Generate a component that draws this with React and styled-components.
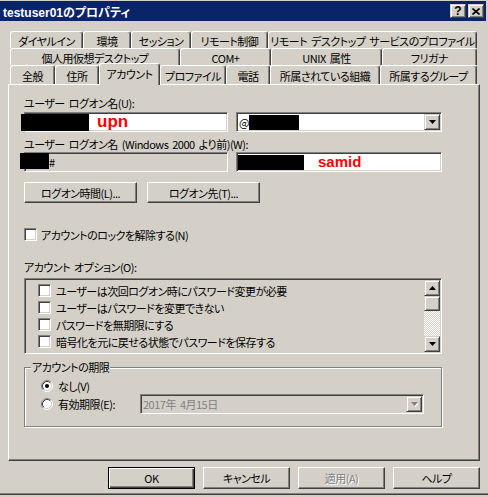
import styled, { createGlobalStyle, css } from 'styled-components'

const FACE = '#d4d0c8'
const SHADOW = '#808080'
const DARK = '#404040'
const HILITE = '#ffffff'
const FONT = `"Noto Sans CJK JP", "Liberation Sans", sans-serif`

const GlobalStyle = createGlobalStyle`
  html, body { margin: 0; background: ${FACE}; }
  body {
    font-family: ${FONT};
    font-size: 11px;
    letter-spacing: -0.5px;
    word-spacing: 2px;
    color: #000;
    font-feature-settings: "palt";
  }
  * { box-sizing: border-box; }
`

// classic 3D edges
const raised = css`
  border: 1px solid;
  border-color: ${HILITE} ${DARK} ${DARK} ${HILITE};
  box-shadow: inset -1px -1px ${SHADOW};
`
const smallRaised = css`
  border: 1px solid;
  border-color: ${FACE} ${DARK} ${DARK} ${FACE};
  box-shadow: inset 1px 1px ${HILITE}, inset -1px -1px ${SHADOW};
`
const sunken = css`
  border: 1px solid;
  border-color: ${SHADOW} ${HILITE} ${HILITE} ${SHADOW};
  box-shadow: inset 1px 1px ${DARK}, inset -1px -1px ${FACE};
`

const Window = styled.div`
  width: 488px;
  height: 495px;
  padding: 1px 2px 0 0;
  display: flex;
  flex-direction: column;
  border-bottom: 1px solid ${DARK};
  box-shadow: inset 0 -1px ${SHADOW};
`

const TitleBar = styled.div`
  height: 20px;
  flex: none;
  background: #0a246a;
  color: #fff;
  display: flex;
  align-items: center;
  justify-content: space-between;
  padding: 0 2px 0 3px;
`

const Title = styled.span`
  font-family: "Liberation Sans", "Noto Sans CJK JP", sans-serif;
  font-weight: bold;
  font-size: 12px;
  letter-spacing: 0;
  word-spacing: 0;
`

const CaptionButtons = styled.div`
  display: flex;
  gap: 2px;
`

const CaptionButton = styled.div`
  ${smallRaised}
  width: 16px;
  height: 14px;
  background: ${FACE};
  color: #000;
  display: flex;
  align-items: center;
  justify-content: center;
  font-family: "Liberation Sans", sans-serif;
  font-weight: bold;
  font-size: 12px;
  letter-spacing: 0;
  line-height: 1;
`

const Body = styled.div`
  flex: 1;
  padding: 10px 6px 0 8px;
  display: flex;
  flex-direction: column;
`

const TabRows = styled.div`
  display: flex;
  flex-direction: column;
  margin-left: 2px;
`

const TabRow = styled.div`
  display: flex;
  height: ${p => p.$h}px;
`

const Tab = styled.div`
  flex: none;
  width: ${p => p.$w}px;
  display: flex;
  align-items: center;
  justify-content: center;
  padding-top: 1px;
  white-space: nowrap;
  line-height: 14px;
  border-left: 1px solid ${HILITE};
  border-top: 1px solid ${HILITE};
  border-right: 1px solid ${DARK};
  box-shadow: inset -1px 0 ${SHADOW};
  border-top-left-radius: 3px;
  border-top-right-radius: 3px;
  background: ${FACE};
  ${p => p.$active && css`
    position: relative;
    z-index: 1;
    margin-top: -2px;
    margin-bottom: -1px;
    padding-bottom: 2px;
  `}
`

const Panel = styled.div`
  ${raised}
  height: 377px;
  flex: none;
  padding: 11px 0 0 15px;
  display: flex;
  flex-direction: column;
`

const Label = styled.div`
  line-height: 14px;
  height: 14px;
  white-space: nowrap;
  margin-top: ${p => p.$mt || 0}px;
`

const FieldRow = styled.div`
  display: flex;
  gap: 8px;
  margin-top: ${p => p.$mt || 0}px;
`

const Field = styled.div`
  ${sunken}
  width: ${p => p.$w}px;
  height: 20px;
  flex: none;
  background: ${p => (p.$disabled ? FACE : '#fff')};
  display: flex;
  align-items: center;
  padding: 0 1px 0 ${p => p.$pad || 0}px;
  color: ${p => (p.$muted ? SHADOW : '#000')};
  white-space: pre;
`

const Redact = styled.span`
  display: block;
  flex: none;
  background: #000;
  width: ${p => p.$w}px;
  height: ${p => p.$h}px;
  margin-left: ${p => p.$ml || 0}px;
  margin-top: ${p => p.$dy || 0}px;
`

const Scribble = styled.span`
  color: #ff0000;
  font-family: "Liberation Sans", sans-serif;
  font-weight: bold;
  font-size: ${p => p.$size}px;
  letter-spacing: 0;
  line-height: 1;
  margin-left: ${p => p.$ml}px;
  margin-top: -2px;
`

const DropButton = styled.div`
  ${smallRaised}
  width: 16px;
  height: 16px;
  flex: none;
  margin-left: auto;
  background: ${FACE};
  display: flex;
  align-items: center;
  justify-content: center;
`

const ButtonRow = styled.div`
  display: flex;
  gap: ${p => p.$gap}px;
  margin-top: ${p => p.$mt || 0}px;
  justify-content: ${p => p.$end ? 'flex-end' : 'flex-start'};
`

const PushButton = styled.div`
  ${raised}
  width: ${p => p.$w}px;
  height: ${p => p.$h}px;
  flex: none;
  display: flex;
  align-items: center;
  justify-content: center;
  white-space: nowrap;
  color: ${p => (p.$disabled ? SHADOW : '#000')};
  text-shadow: ${p => (p.$disabled ? `1px 1px ${HILITE}` : 'none')};
  ${p => p.$default && css`
    border: 1px solid #000;
    box-shadow: inset 1px 1px ${HILITE}, inset -1px -1px ${DARK}, inset -2px -2px ${SHADOW};
  `}
`

const CheckRow = styled.div`
  display: flex;
  align-items: center;
  gap: ${p => p.$gap || 4}px;
  height: ${p => p.$h || 15}px;
  margin-top: ${p => p.$mt || 0}px;
  white-space: nowrap;
  line-height: 14px;
`

const CheckBox = styled.span`
  ${sunken}
  display: block;
  flex: none;
  width: 13px;
  height: 13px;
  background: #fff;
`

const ListBox = styled.div`
  ${sunken}
  width: 418px;
  height: 76px;
  margin-top: 4px;
  background: ${FACE};
  display: flex;
`

const ListItems = styled.div`
  flex: 1;
  padding: 3px 0 0 13px;
`

const ScrollBar = styled.div`
  width: 16px;
  flex: none;
  margin: 1px 1px 1px 0;
  display: flex;
  flex-direction: column;
`

const ScrollButton = styled.div`
  ${smallRaised}
  height: ${p => p.$h}px;
  background: ${FACE};
  display: flex;
  align-items: center;
  justify-content: center;
`

const ScrollTrack = styled.div`
  flex: 1;
  background: repeating-conic-gradient(${HILITE} 0 25%, ${FACE} 0 50%) 0 0 / 2px 2px;
`

const Group = styled.div`
  width: 418px;
  margin-top: 13px;
  border: 1px solid ${SHADOW};
  box-shadow: 1px 1px ${HILITE}, inset 1px 1px ${HILITE};
  padding: 0 0 12px 16px;
  display: flex;
  flex-direction: column;
`

const GroupCaption = styled.div`
  align-self: flex-start;
  margin: -8px 0 0 -10px;
  padding: 0 1px;
  background: ${FACE};
  line-height: 14px;
  height: 14px;
`

const RadioRow = styled.div`
  display: flex;
  align-items: center;
  height: ${p => p.$h}px;
  margin-top: ${p => p.$mt || 0}px;
  white-space: nowrap;
  line-height: 14px;
`

const RadioLabel = styled.div`
  display: flex;
  align-items: center;
  gap: 5px;
  width: ${p => (p.$w ? `${p.$w}px` : 'auto')};
  flex: none;
`

const DateField = styled(Field)`
  padding-left: 2px;
`

const Arrow = ({ up, disabled }) => (
  <svg width="7" height="5" viewBox="0 0 7 5">
    {disabled && (
      <polygon points={up ? '1,5 8,5 4.5,1' : '1,1 8,1 4.5,5'} fill={HILITE} />
    )}
    <polygon points={up ? '0,4 7,4 3.5,0' : '0,0 7,0 3.5,4'} fill={disabled ? SHADOW : '#000'} />
  </svg>
)

const CloseGlyph = () => (
  <svg width="8" height="7" viewBox="0 0 8 7">
    <path d="M0.5 0.5 L7.5 6.5 M7.5 0.5 L0.5 6.5" stroke="#000" strokeWidth="1.6" />
  </svg>
)

const Radio = ({ checked }) => (
  <svg width="12" height="12" viewBox="0 0 12 12" style={{ flex: 'none' }}>
    <circle cx="6" cy="6" r="4.5" fill="#fff" />
    <path d="M2.11 9.89 A5.5 5.5 0 0 1 9.89 2.11" fill="none" stroke={SHADOW} />
    <path d="M9.89 2.11 A5.5 5.5 0 0 1 2.11 9.89" fill="none" stroke={HILITE} />
    <path d="M2.82 9.18 A4.5 4.5 0 0 1 9.18 2.82" fill="none" stroke={DARK} />
    <path d="M9.18 2.82 A4.5 4.5 0 0 1 2.82 9.18" fill="none" stroke={FACE} />
    {checked && <circle cx="6" cy="6" r="2" fill="#000" />}
  </svg>
)

const tabRows = [
  {
    h: 17,
    tabs: [
      ['ダイヤルイン', 73],
      ['環境', 48],
      ['セッション', 60],
      ['リモート制御', 77],
      ['リモート デスクトップ サービスのプロファイル', 209],
    ],
  },
  {
    h: 17,
    tabs: [
      ['個人用仮想デスクトップ', 170],
      ['COM+', 91],
      ['UNIX 属性', 111],
      ['フリガナ', 95],
    ],
  },
  {
    h: 19,
    tabs: [
      ['全般', 45],
      ['住所', 44],
      ['アカウント', 61, true],
      ['プロファイル', 66],
      ['電話', 44],
      ['所属されている組織', 110],
      ['所属するグループ', 97],
    ],
  },
]

const accountOptions = [
  'ユーザーは次回ログオン時にパスワード変更が必要',
  'ユーザーはパスワードを変更できない',
  'パスワードを無期限にする',
  '暗号化を元に戻せる状態でパスワードを保存する',
]

export default function App () {
  return (
    <Window>
      <GlobalStyle />
      <TitleBar>
        <Title>testuser01のプロパティ</Title>
        <CaptionButtons>
          <CaptionButton>?</CaptionButton>
          <CaptionButton><CloseGlyph /></CaptionButton>
        </CaptionButtons>
      </TitleBar>

      <Body>
        <TabRows>
          {tabRows.map((row, i) => (
            <TabRow key={i} $h={row.h}>
              {row.tabs.map(([label, w, active]) => (
                <Tab key={label} $w={w} $active={active}>{label}</Tab>
              ))}
            </TabRow>
          ))}
        </TabRows>

        <Panel>
          <Label>ユーザー ログオン名(U):</Label>
          <FieldRow $mt={2}>
            <Field $w={204}>
              <Redact $w={68} $h={17} $ml={-4} />
              <Scribble $size={17} $ml={8}>upn</Scribble>
            </Field>
            <Field $w={206} $pad={2}>
              @
              <Redact $w={50} $h={15} />
              <DropButton><Arrow /></DropButton>
            </Field>
          </FieldRow>

          <Label $mt={5}>ユーザー ログオン名 (Windows 2000 より前)(W):</Label>
          <FieldRow $mt={1}>
            <Field $w={204} $disabled>
              <Redact $w={29} $h={16} $ml={-5} $dy={-2} />
              #
            </Field>
            <Field $w={206}>
              <Redact $w={66} $h={15} $ml={1} />
              <Scribble $size={15} $ml={14}>samid</Scribble>
            </Field>
          </FieldRow>

          <ButtonRow $gap={10} $mt={10}>
            <PushButton $w={113} $h={21}>ログオン時間(L)...</PushButton>
            <PushButton $w={113} $h={21}>ログオン先(T)...</PushButton>
          </ButtonRow>

          <CheckRow $mt={24}>
            <CheckBox />
            アカウントのロックを解除する(N)
          </CheckRow>

          <Label $mt={18}>アカウント オプション(O):</Label>
          <ListBox>
            <ListItems>
              {accountOptions.map(text => (
                <CheckRow key={text} $h={17} $gap={5}>
                  <CheckBox />
                  {text}
                </CheckRow>
              ))}
            </ListItems>
            <ScrollBar>
              <ScrollButton $h={16}><Arrow up /></ScrollButton>
              <ScrollButton $h={15} />
              <ScrollTrack />
              <ScrollButton $h={16}><Arrow /></ScrollButton>
            </ScrollBar>
          </ListBox>

          <Group>
            <GroupCaption>アカウントの期限</GroupCaption>
            <RadioRow $h={16} $mt={4}>
              <RadioLabel>
                <Radio checked />
                なし(V)
              </RadioLabel>
            </RadioRow>
            <RadioRow $h={20}>
              <RadioLabel $w={99}>
                <Radio />
                有効期限(E):
              </RadioLabel>
              <DateField $w={284} $disabled $muted>
                {'2017年 4月15日'}
                <DropButton><Arrow disabled /></DropButton>
              </DateField>
            </RadioRow>
          </Group>
        </Panel>

        <ButtonRow $gap={8} $mt={6} $end>
          <PushButton $w={87} $h={22} $default>OK</PushButton>
          <PushButton $w={87} $h={22}>キャンセル</PushButton>
          <PushButton $w={87} $h={22} $disabled>適用(A)</PushButton>
          <PushButton $w={87} $h={22}>ヘルプ</PushButton>
        </ButtonRow>
      </Body>
    </Window>
  )
}
